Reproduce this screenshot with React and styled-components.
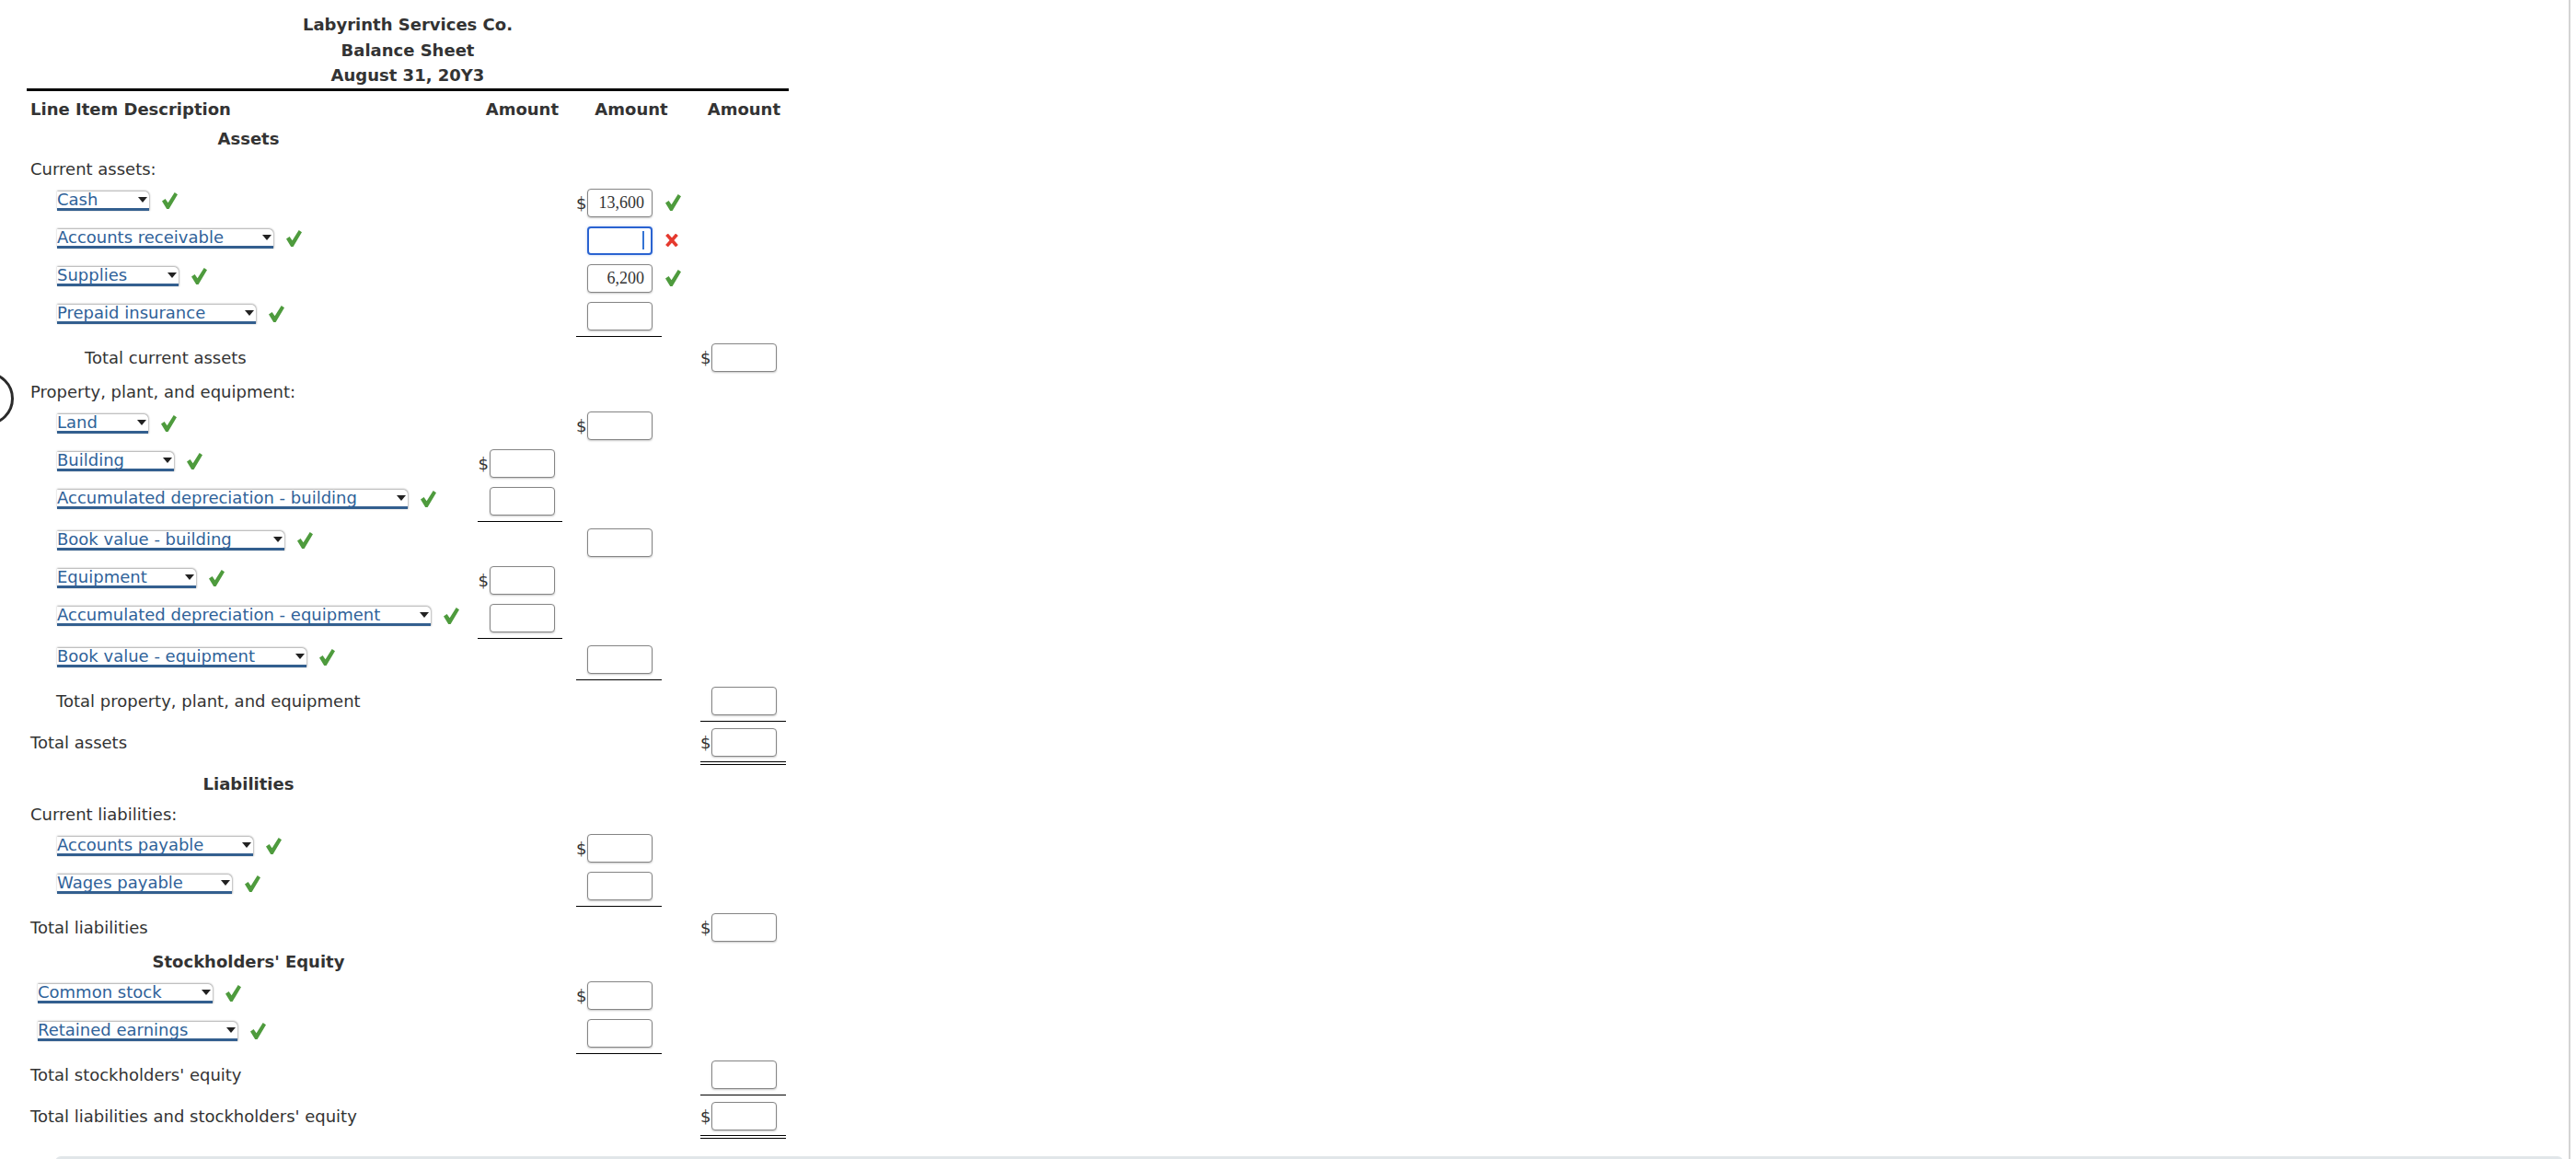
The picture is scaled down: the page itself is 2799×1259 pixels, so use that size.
import React from 'react'
import styled, { createGlobalStyle } from 'styled-components'

const GlobalStyle = createGlobalStyle`
  body {
    margin: 0;
    background: #fff;
    font-family: 'DejaVu Sans', Verdana, sans-serif;
    color: #333;
    overflow: hidden;
  }
`

// column geometry for the three amount columns
const COLS = {
  b: { ml: 8, mr: 4, pr: 8 },
  c: { ml: 11, mr: 3, pr: 10 },
  e: { ml: 4, mr: 3, pr: 10 },
}

const HEIGHTS = { text: 33, item: 41, line: 45, double: 49, header: 35 }

const rows = [
  { kind: 'heading', label: 'Assets' },
  { kind: 'text', label: 'Current assets:' },
  { sel: 'Cash', w: 100, c: { d: true, v: '13,600' }, mark: 'ok' },
  { sel: 'Accounts receivable', w: 235, c: { focus: true }, mark: 'bad' },
  { sel: 'Supplies', w: 132, c: { v: '6,200' }, mark: 'ok' },
  { sel: 'Prepaid insurance', w: 216, c: { line: 1 } },
  { label: 'Total current assets', indent: 63, e: { d: true } },
  { kind: 'text', label: 'Property, plant, and equipment:' },
  { sel: 'Land', w: 99, c: { d: true } },
  { sel: 'Building', w: 127, b: { d: true } },
  { sel: 'Accumulated depreciation - building', w: 381, b: { line: 1 } },
  { sel: 'Book value - building', w: 247, c: {} },
  { sel: 'Equipment', w: 151, b: { d: true } },
  { sel: 'Accumulated depreciation - equipment', w: 406, b: { line: 1 } },
  { sel: 'Book value - equipment', w: 271, c: { line: 1 } },
  { label: 'Total property, plant, and equipment', indent: 32, e: { line: 1 } },
  { label: 'Total assets', indent: 4, e: { d: true, line: 2 } },
  { kind: 'heading', label: 'Liabilities' },
  { kind: 'text', label: 'Current liabilities:' },
  { sel: 'Accounts payable', w: 213, c: { d: true } },
  { sel: 'Wages payable', w: 190, c: { line: 1 } },
  { label: 'Total liabilities', indent: 4, e: { d: true } },
  { kind: 'heading', label: "Stockholders' Equity" },
  { sel: 'Common stock', w: 190, indent: 12, c: { d: true } },
  { sel: 'Retained earnings', w: 217, indent: 12, c: { line: 1 } },
  { label: "Total stockholders' equity", indent: 4, e: { line: 1 } },
  { label: "Total liabilities and stockholders' equity", indent: 4, e: { d: true, line: 2 } },
]

const rowHeight = (r) => {
  if (r.kind === 'text' || r.kind === 'heading') return HEIGHTS.text
  const lines = [r.b, r.c, r.e].map((x) => (x && x.line) || 0)
  const max = Math.max(...lines)
  return max === 2 ? HEIGHTS.double : max === 1 ? HEIGHTS.line : HEIGHTS.item
}

const Check = () => (
  <svg width='17' height='18' viewBox='0 0 17 18'>
    <path
      d='M0 9.6 L3.6 7.1 L6.6 11.2 L13.7 0 L17 2.2 L7.6 18 L5.2 18 Z'
      fill='#4e9b3d'
    />
  </svg>
)

const Cross = () => (
  <svg width='14' height='14' viewBox='0 0 14 14'>
    <g stroke='#e5392e' strokeWidth='3.6'>
      <line x1='1.5' y1='0.8' x2='12.5' y2='13.2' />
      <line x1='12.5' y1='0.8' x2='1.5' y2='13.2' />
    </g>
  </svg>
)

const Amount = ({ col, cell }) => {
  if (!cell) return <div />
  const g = COLS[col]
  return (
    <Slot $ml={g.ml} $mr={g.mr} $pr={g.pr} $line={cell.line || 0}>
      {cell.d && <Dollar>$</Dollar>}
      <Box $focus={cell.focus}>
        {cell.v}
        {cell.focus && <Caret />}
      </Box>
    </Slot>
  )
}

const App = () => {
  return (
    <Page>
      <GlobalStyle />
      <Ring />
      <Sheet>
        <Title>
          <div>Labyrinth Services Co.</div>
          <div>Balance Sheet</div>
          <div>August 31, 20Y3</div>
        </Title>
        <Row $h={HEIGHTS.header}>
          <HeadCell $align='left'>Line Item Description</HeadCell>
          <HeadCell $pr={8}>Amount</HeadCell>
          <HeadCell $span={2} $align='center'>
            Amount
          </HeadCell>
          <HeadCell $pr={9}>Amount</HeadCell>
        </Row>
        {rows.map((r, i) => {
          if (r.kind === 'heading') {
            return (
              <Row key={i} $h={HEIGHTS.text}>
                <Heading>{r.label}</Heading>
              </Row>
            )
          }
          if (r.kind === 'text') {
            return (
              <Row key={i} $h={HEIGHTS.text}>
                <Label $indent={4}>{r.label}</Label>
              </Row>
            )
          }
          return (
            <Row key={i} $h={rowHeight(r)}>
              {r.sel ? (
                <Desc $indent={r.indent || 33}>
                  <Select $w={r.w}>
                    {r.sel}
                    <Arrow />
                  </Select>
                  <Check />
                </Desc>
              ) : (
                <Label $indent={r.indent} $h={41}>
                  {r.label}
                </Label>
              )}
              <Amount col='b' cell={r.b} />
              <Amount col='c' cell={r.c} />
              <Mark>
                {r.mark === 'ok' && <Check />}
                {r.mark === 'bad' && <Cross />}
              </Mark>
              <Amount col='e' cell={r.e} />
            </Row>
          )
        })}
      </Sheet>
      <BottomBar />
    </Page>
  )
}

const Page = styled.div`
  position: relative;
  box-sizing: border-box;
  width: 2793px;
  min-height: 100vh;
  padding: 0 0 0 29px;
  border-right: 2px solid #d4d4d4;
`

const Ring = styled.div`
  position: absolute;
  left: -43px;
  top: 404px;
  width: 52px;
  height: 52px;
  border: 3px solid #2b2b2b;
  border-radius: 50%;
`

const Sheet = styled.div`
  width: 828px;
`

const Title = styled.div`
  padding-top: 13px;
  border-bottom: 3px solid #000;
  text-align: center;
  font-weight: bold;
  font-size: 18px;
  line-height: 27.5px;
  color: #333;
`

const Row = styled.div`
  display: grid;
  grid-template-columns: 482px 104px 107px 35px 100px;
  align-items: start;
  height: ${(p) => p.$h}px;
`

const HeadCell = styled.div`
  grid-column: span ${(p) => p.$span || 1};
  padding: 3px ${(p) => p.$pr || 0}px 0 ${(p) => (p.$align === 'left' ? 4 : 0)}px;
  line-height: 33px;
  font-size: 18px;
  font-weight: bold;
  text-align: ${(p) => p.$align || 'right'};
`

const Heading = styled.div`
  line-height: 33px;
  font-size: 18px;
  font-weight: bold;
  text-align: center;
`

const Label = styled.div`
  display: flex;
  align-items: center;
  height: ${(p) => p.$h || 33}px;
  padding-left: ${(p) => p.$indent}px;
  font-size: 18px;
  white-space: nowrap;
`

const Desc = styled.div`
  display: flex;
  align-items: center;
  gap: 14px;
  padding: 8px 0 0 ${(p) => p.$indent}px;
`

const Select = styled.div`
  position: relative;
  box-sizing: border-box;
  width: ${(p) => p.$w}px;
  height: 21px;
  font-size: 18px;
  line-height: 18px;
  color: #2f6299;
  background: #fff;
  white-space: nowrap;
  border-bottom: 3px solid #335f8f;
  border-radius: 0 5px 0 0;
  box-shadow: 0 -1px 2px rgba(0, 0, 0, 0.28), 1px 0 2px rgba(0, 0, 0, 0.2);
`

const Arrow = styled.span`
  position: absolute;
  right: 2px;
  top: 6px;
  width: 0;
  height: 0;
  border-left: 5px solid transparent;
  border-right: 5px solid transparent;
  border-top: 6px solid #222;
`

const Slot = styled.div`
  display: flex;
  justify-content: flex-end;
  align-items: center;
  margin: 0 ${(p) => p.$mr}px 0 ${(p) => p.$ml}px;
  padding: 5px ${(p) => p.$pr}px ${(p) => (p.$line === 1 ? 6 : 5)}px 0;
  border-bottom: ${(p) =>
    p.$line === 1 ? '1px solid #000' : p.$line === 2 ? '4px double #000' : 'none'};
`

const Dollar = styled.span`
  font-size: 18px;
  color: #333;
  margin-right: 1px;
`

const Box = styled.div`
  box-sizing: border-box;
  display: flex;
  align-items: center;
  justify-content: flex-end;
  width: 71px;
  height: 31px;
  padding-right: ${(p) => (p.$focus ? 7 : 8)}px;
  border: ${(p) => (p.$focus ? '2px solid #2a63d1' : '1px solid #858585')};
  border-radius: 4px;
  box-shadow: ${(p) =>
    p.$focus ? '0 0 3px rgba(42, 99, 209, 0.35)' : '0 1px 2px rgba(0, 0, 0, 0.22)'};
  background: #fff;
  font-family: 'Liberation Serif', 'Times New Roman', serif;
  font-size: 18px;
  color: #333;
`

const Caret = styled.span`
  width: 2px;
  height: 20px;
  background: #3474d4;
`

const Mark = styled.div`
  display: flex;
  align-items: center;
  height: 31px;
  padding: 5px 0 0 1px;
`

const BottomBar = styled.div`
  height: 20px;
  margin: 15px 6px 0 31px;
  background: #e1e6e9;
  border-radius: 6px 6px 0 0;
`

export default App
